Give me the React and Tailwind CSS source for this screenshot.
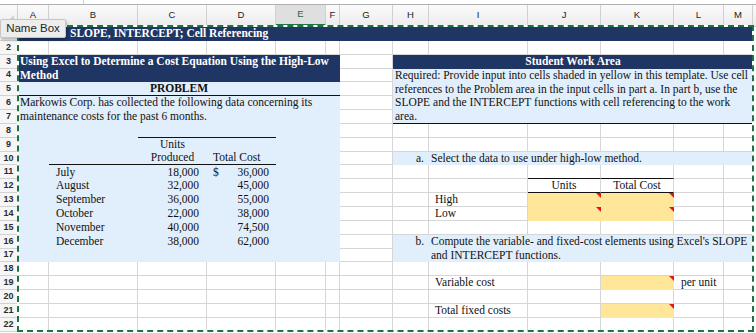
import React from "react";

const SPAN = {
  1: "col-span-1",
  2: "col-span-2",
  5: "col-span-5",
  6: "col-span-6",
  13: "col-span-13",
};

const COLS =
  "grid grid-cols-[18px_31px_89px_69px_69px_50px_14px_53px_36px_99px_73px_73px_50px_29px_1fr]";

function Cell({ span = 1, fill, bb, className = "", children }) {
  let look = "bg-white border-r border-r-[#d6d6d6]";
  if (fill === "navy") look = "bg-[#1f3563] text-white font-bold";
  if (fill === "blue") look = "bg-[#e1eefb]";
  if (fill === "yellow") look = "bg-[#ffe699]";
  let bottom = "";
  if (bb) bottom = "border-b border-b-[#111]";
  else if (!fill) bottom = "border-b border-b-[#d6d6d6]";
  return (
    <div className={`${SPAN[span]} ${look} ${bottom} relative flex items-center whitespace-nowrap min-w-0 ${className}`}>
      {children}
    </div>
  );
}

// red comment marker on the input cells
function Input() {
  return (
    <Cell fill="yellow">
      <span className="absolute top-0 right-0 w-0 h-0 border-l-[5px] border-l-transparent border-t-[5px] border-t-[#e8141b]" />
    </Cell>
  );
}

function plain(k, from = 0) {
  return Array.from({ length: k }, (_, i) => <Cell key={"p" + from + i} />);
}

function Row({ n, children }) {
  return (
    <>
      <div className="bg-[#f6f6f6] border-r border-b border-[#d2d2d2] flex items-center justify-center text-[9px] font-bold text-[#2b2b2b] font-['Liberation_Sans',sans-serif]">
        {n}
      </div>
      {children}
      <div className="bg-white" />
    </>
  );
}

const months = [
  ["July", "18,000", "$", "36,000"],
  ["August", "32,000", "", "45,000"],
  ["September", "36,000", "", "55,000"],
  ["October", "22,000", "", "38,000"],
  ["November", "40,000", "", "74,500"],
  ["December", "38,000", "", "62,000"],
];

function MonthCells({ m }) {
  return (
    <>
      <Cell fill="blue" />
      <Cell fill="blue" className="pl-[7px]">{m[0]}</Cell>
      <Cell fill="blue" className="justify-end pr-[8px]">{m[1]}</Cell>
      <Cell fill="blue" className="justify-between pl-[6px] pr-[7px]">
        <span>{m[2]}</span>
        <span>{m[3]}</span>
      </Cell>
      <Cell fill="blue" span={2} />
      <Cell />
    </>
  );
}

const letters = ["A", "B", "C", "D", "E", "F", "G", "H", "I", "J", "K", "L", "M"];

export default function App() {
  return (
    <div className="relative w-[756px] h-[333px] overflow-hidden bg-white">
      {/* formula bar edge */}
      <div className="h-[5px] bg-white border-b border-[#b0b0b0]">
        <div className="ml-[83px] w-px h-full bg-[#cfcfcf]" />
      </div>

      {/* column headers */}
      <div className={`${COLS} h-[22px] font-['Liberation_Sans',sans-serif] text-[9.5px] text-[#222] bg-linear-to-b from-[#fbfbfb] to-[#ececec] border-b border-[#c8c8c8]`}>
        <div className="relative border-r border-[#d0d0d0]">
          <svg className="absolute right-[3px] bottom-[3px]" width="8" height="8" viewBox="0 0 8 8">
            <polygon points="8,0 8,8 0,8" fill="#cfcfcf" />
          </svg>
        </div>
        {letters.map((l) => (
          <div
            key={l}
            className={
              l === "E"
                ? "flex items-center justify-center border-r border-[#d0d0d0] bg-[#dfdfdf] text-[#1e6b3f] border-b-2 border-b-[#217346]"
                : "flex items-center justify-center border-r border-[#d0d0d0]"
            }
          >
            {l}
          </div>
        ))}
        <div />
      </div>

      {/* sheet */}
      <div className={`${COLS} auto-rows-[13.85px] font-['Liberation_Serif',serif] text-[11.5px] leading-none text-[#111]`}>
        <Row n={1}>
          <Cell fill="navy" span={13} className="pl-[52px]">SLOPE, INTERCEPT; Cell Referencing</Cell>
        </Row>
        <Row n={2}>{plain(13)}</Row>
        <Row n={3}>
          <Cell fill="navy" span={6} className="pl-[2px]">Using Excel to Determine a Cost Equation Using the High-Low</Cell>
          <Cell />
          <Cell fill="navy" span={6} className="justify-center">Student Work Area</Cell>
        </Row>
        <Row n={4}>
          <Cell fill="navy" span={6} className="pl-[2px]">Method</Cell>
          <Cell />
          <Cell fill="blue" span={6} className="pl-[2px]">Required: Provide input into cells shaded in yellow in this template. Use cell</Cell>
        </Row>
        <Row n={5}>
          <Cell fill="blue" span={6} bb className="justify-center font-bold">PROBLEM</Cell>
          <Cell />
          <Cell fill="blue" span={6} className="pl-[2px]">references to the Problem area in the input cells in part a. In part b, use the</Cell>
        </Row>
        <Row n={6}>
          <Cell fill="blue" span={6} className="pl-[2px]">Markowis Corp. has collected the following data concerning its</Cell>
          <Cell />
          <Cell fill="blue" span={6} className="pl-[2px]">SLOPE and the INTERCEPT functions with cell referencing to the work</Cell>
        </Row>
        <Row n={7}>
          <Cell fill="blue" span={6} className="pl-[2px]">maintenance costs for the past 6 months.</Cell>
          <Cell />
          <Cell fill="blue" span={6} bb className="pl-[2px]">area.</Cell>
        </Row>
        <Row n={8}>
          <Cell fill="blue" span={2} />
          <Cell fill="blue" span={2} bb />
          <Cell fill="blue" span={2} />
          {plain(7)}
        </Row>
        <Row n={9}>
          <Cell fill="blue" span={2} />
          <Cell fill="blue" className="justify-center">Units</Cell>
          <Cell fill="blue" />
          <Cell fill="blue" span={2} />
          {plain(7)}
        </Row>
        <Row n={10}>
          <Cell fill="blue" />
          <Cell fill="blue" bb />
          <Cell fill="blue" bb className="justify-center">Produced</Cell>
          <Cell fill="blue" bb className="pl-[6px]">Total Cost</Cell>
          <Cell fill="blue" span={2} />
          <Cell />
          <Cell fill="blue" className="justify-end pr-[5px]">a.</Cell>
          <Cell fill="blue" span={5} className="pl-[2px]">Select the data to use under high-low method.</Cell>
        </Row>
        <Row n={11}>
          <MonthCells m={months[0]} />
          {plain(2)}
          <Cell bb />
          <Cell bb />
          {plain(2, 5)}
        </Row>
        <Row n={12}>
          <MonthCells m={months[1]} />
          {plain(2)}
          <Cell bb className="justify-center">Units</Cell>
          <Cell bb className="justify-center">Total Cost</Cell>
          {plain(2, 5)}
        </Row>
        <Row n={13}>
          <MonthCells m={months[2]} />
          <Cell />
          <Cell className="pl-[6px]">High</Cell>
          <Input />
          <Input />
          {plain(2, 5)}
        </Row>
        <Row n={14}>
          <MonthCells m={months[3]} />
          <Cell />
          <Cell className="pl-[6px]">Low</Cell>
          <Input />
          <Input />
          {plain(2, 5)}
        </Row>
        <Row n={15}>
          <MonthCells m={months[4]} />
          {plain(6)}
        </Row>
        <Row n={16}>
          <MonthCells m={months[5]} />
          <Cell fill="blue" className="justify-end pr-[5px]">b.</Cell>
          <Cell fill="blue" span={5} className="pl-[2px]">Compute the variable- and fixed-cost elements using Excel's SLOPE</Cell>
        </Row>
        <Row n={17}>
          <Cell fill="blue" span={6} />
          <Cell />
          <Cell fill="blue" />
          <Cell fill="blue" span={5} className="pl-[2px]">and INTERCEPT functions.</Cell>
        </Row>
        <Row n={18}>{plain(13)}</Row>
        <Row n={19}>
          {plain(8)}
          <Cell className="pl-[6px]">Variable cost</Cell>
          <Cell />
          <Input />
          <Cell className="pl-[7px]">per unit</Cell>
          <Cell />
        </Row>
        <Row n={20}>{plain(13)}</Row>
        <Row n={21}>
          {plain(8)}
          <Cell className="pl-[6px]">Total fixed costs</Cell>
          <Cell />
          <Input />
          {plain(2, 5)}
        </Row>
        <Row n={22}>{plain(13)}</Row>
      </div>

      {/* copy selection marquee */}
      <div className="absolute left-[17px] top-[25px] w-[737px] h-[307px] border-2 border-white pointer-events-none" />
      <div className="absolute left-[17px] top-[25px] w-[737px] h-[307px] border-2 border-dashed border-[#1f7244] pointer-events-none" />

      {/* Name Box tooltip */}
      <div className="absolute left-0 top-[19px] w-[66px] h-[19px] bg-[#ededed] border border-[#c6c6c6] rounded-[2px] shadow-[1px_2px_3px_rgba(0,0,0,0.25)] flex items-center justify-center font-['Liberation_Sans',sans-serif] text-[11.5px] text-[#262626]">
        Name Box
      </div>
    </div>
  );
}
